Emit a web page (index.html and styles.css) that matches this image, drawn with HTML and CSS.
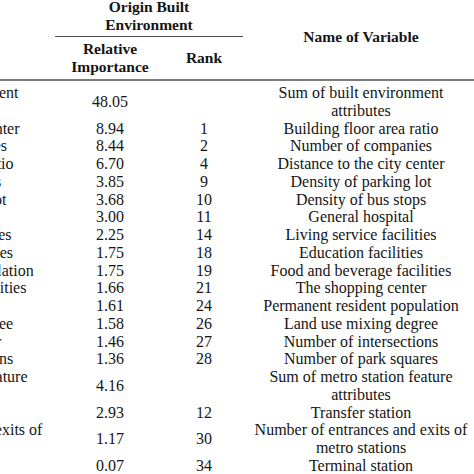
FILE: index.html
```html
<!DOCTYPE html>
<html>
<head>
<meta charset="utf-8">
<link rel="stylesheet" href="styles.css">
</head>
<body>
<div class="frame">
<table class="tbl">
  <colgroup>
    <col class="c-name-left">
    <col class="c-ri">
    <col class="c-rank">
    <col class="c-name">
  </colgroup>
  <thead>
    <tr>
      <th rowspan="2"></th>
      <th colspan="2" class="group">Origin Built<br>Environment</th>
      <th rowspan="2" class="name-head">Name of Variable</th>
    </tr>
    <tr>
      <th class="sub">Relative<br>Importance</th>
      <th class="sub">Rank</th>
    </tr>
  </thead>
  <tbody>
    <tr class="first"><td class="txt">Sum of built environment attributes</td><td>48.05</td><td></td><td class="txt">Sum of built environment attributes</td></tr>
    <tr><td class="txt">Distance to the city center</td><td>8.94</td><td>1</td><td class="txt">Building floor area ratio</td></tr>
    <tr><td class="txt">Number of companies</td><td>8.44</td><td>2</td><td class="txt">Number of companies</td></tr>
    <tr><td class="txt">Building floor area ratio</td><td>6.70</td><td>4</td><td class="txt">Distance to the city center</td></tr>
    <tr><td class="txt">Density of bus stops</td><td>3.85</td><td>9</td><td class="txt">Density of parking lot</td></tr>
    <tr><td class="txt">Density of parking lot</td><td>3.68</td><td>10</td><td class="txt">Density of bus stops</td></tr>
    <tr><td class="txt">General hospital</td><td>3.00</td><td>11</td><td class="txt">General hospital</td></tr>
    <tr><td class="txt">Living service facilities</td><td>2.25</td><td>14</td><td class="txt">Living service facilities</td></tr>
    <tr><td class="txt">Number of park squares</td><td>1.75</td><td>18</td><td class="txt">Education facilities</td></tr>
    <tr><td class="txt">Permanent resident population</td><td>1.75</td><td>19</td><td class="txt">Food and beverage facilities</td></tr>
    <tr><td class="txt">Food and beverage facilities</td><td>1.66</td><td>21</td><td class="txt">The shopping center</td></tr>
    <tr><td class="txt">Education facilities</td><td>1.61</td><td>24</td><td class="txt">Permanent resident population</td></tr>
    <tr><td class="txt">Land use mixing degree</td><td>1.58</td><td>26</td><td class="txt">Land use mixing degree</td></tr>
    <tr><td class="txt">The shopping center</td><td>1.46</td><td>27</td><td class="txt">Number of intersections</td></tr>
    <tr><td class="txt">Number of intersections</td><td>1.36</td><td>28</td><td class="txt">Number of park squares</td></tr>
    <tr><td class="txt">Sum of metro station feature attributes</td><td>4.16</td><td></td><td class="txt">Sum of metro station feature attributes</td></tr>
    <tr><td class="txt">Terminal station</td><td>2.93</td><td>12</td><td class="txt">Transfer station</td></tr>
    <tr><td class="txt">Number of entrances and exits of metro stations</td><td>1.17</td><td>30</td><td class="txt">Number of entrances and exits of metro stations</td></tr>
    <tr><td class="txt">Transfer station</td><td>0.07</td><td>34</td><td class="txt">Terminal station</td></tr>
  </tbody>
</table>
</div>
</body>
</html>
```

FILE: styles.css
```css
html, body {
  margin: 0;
  padding: 0;
  background: #ffffff;
}

.frame {
  width: 474px;
  height: 474px;
  overflow: hidden;
}

.tbl {
  margin-left: -183px;
  margin-top: -2px;
  border-collapse: collapse;
  table-layout: fixed;
  width: 662px;
  font-family: "Liberation Serif", "Times New Roman", serif;
  color: #151515;
}

.c-name-left { width: 238px; }
.c-ri { width: 110px; }
.c-rank { width: 78px; }
.c-name { width: 236px; }

.tbl thead {
  border-bottom: 2px solid #7c7c7c;
}

.tbl th {
  font-size: 15.5px;
  font-weight: bold;
  line-height: 17.5px;
  padding: 0;
  text-align: center;
  vertical-align: middle;
}

.tbl th.group {
  padding: 0 0 3px 0;
  border-bottom: 1px solid #4a4a4a;
}

.tbl th.sub {
  padding: 3px 0 4px 0;
}

.tbl th.name-head {
  padding-bottom: 3px;
}

.tbl td {
  font-size: 16px;
  line-height: 17.75px;
  padding: 0;
  text-align: center;
  vertical-align: middle;
}

.tbl td.txt {
  padding: 0 8px;
}

.tbl tr.first td {
  padding-top: 3px;
}
```
